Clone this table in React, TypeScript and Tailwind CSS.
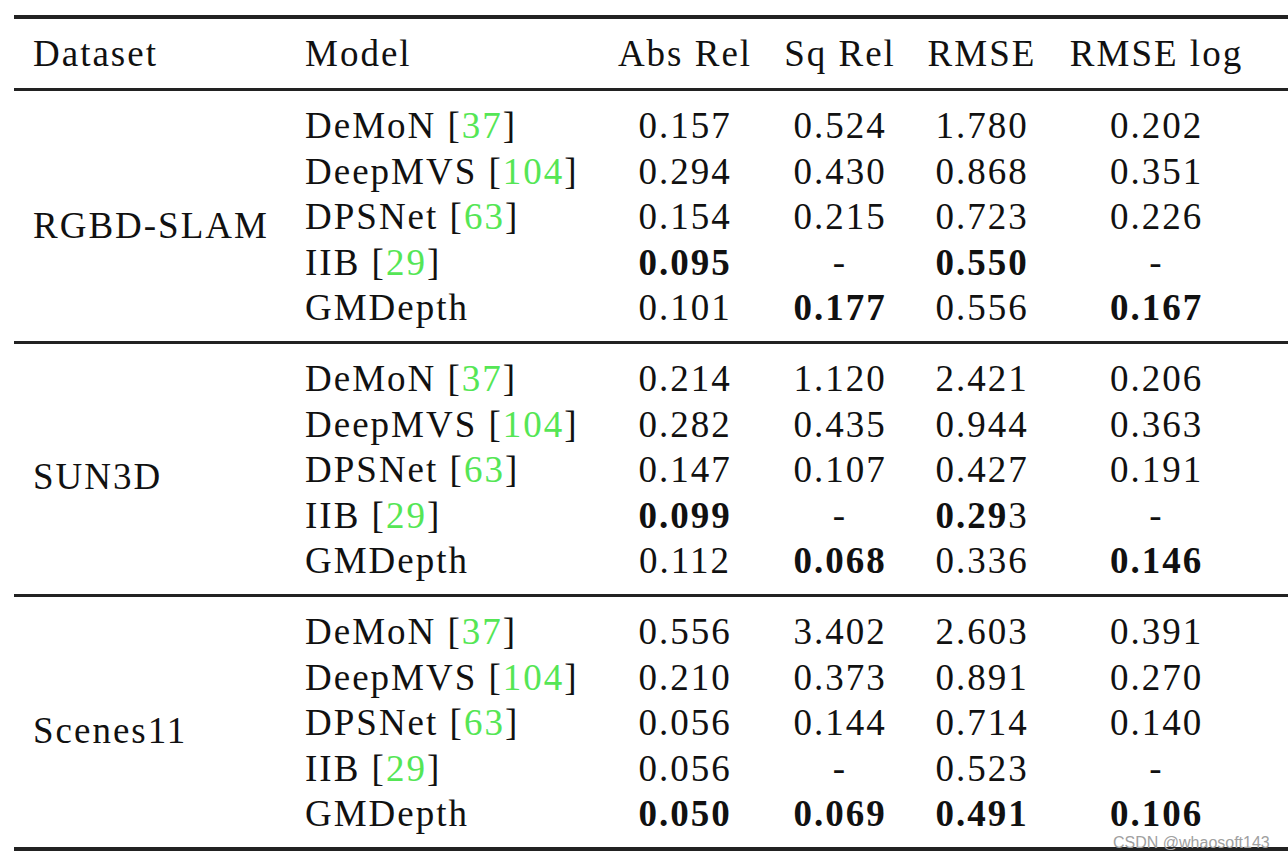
import type { ReactNode } from 'react'

type Cell = string | ReactNode

interface Row {
  model: string
  cite?: string
  values: Cell[]
}

interface Group {
  name: string
  offset: string
  rows: Row[]
}

const B = ({ children }: { children: ReactNode }) => <span className="font-bold">{children}</span>

const groups: Group[] = [
  {
    name: 'RGBD-SLAM',
    offset: 'pt-[18px]',
    rows: [
      { model: 'DeMoN', cite: '37', values: ['0.157', '0.524', '1.780', '0.202'] },
      { model: 'DeepMVS', cite: '104', values: ['0.294', '0.430', '0.868', '0.351'] },
      { model: 'DPSNet', cite: '63', values: ['0.154', '0.215', '0.723', '0.226'] },
      { model: 'IIB', cite: '29', values: [<B>0.095</B>, '-', <B>0.550</B>, '-'] },
      { model: 'GMDepth', values: ['0.101', <B>0.177</B>, '0.556', <B>0.167</B>] },
    ],
  },
  {
    name: 'SUN3D',
    offset: 'pt-[14px]',
    rows: [
      { model: 'DeMoN', cite: '37', values: ['0.214', '1.120', '2.421', '0.206'] },
      { model: 'DeepMVS', cite: '104', values: ['0.282', '0.435', '0.944', '0.363'] },
      { model: 'DPSNet', cite: '63', values: ['0.147', '0.107', '0.427', '0.191'] },
      { model: 'IIB', cite: '29', values: [<B>0.099</B>, '-', <><B>0.29</B>3</>, '-'] },
      { model: 'GMDepth', values: ['0.112', <B>0.068</B>, '0.336', <B>0.146</B>] },
    ],
  },
  {
    name: 'Scenes11',
    offset: 'pt-[16px]',
    rows: [
      { model: 'DeMoN', cite: '37', values: ['0.556', '3.402', '2.603', '0.391'] },
      { model: 'DeepMVS', cite: '104', values: ['0.210', '0.373', '0.891', '0.270'] },
      { model: 'DPSNet', cite: '63', values: ['0.056', '0.144', '0.714', '0.140'] },
      { model: 'IIB', cite: '29', values: ['0.056', '-', '0.523', '-'] },
      { model: 'GMDepth', values: [<B>0.050</B>, <B>0.069</B>, <B>0.491</B>, <B>0.106</B>] },
    ],
  },
]

const cols = 'grid grid-cols-[291px_295px_170px_140px_144px_205px]'

export default function App() {
  return (
    <div className="relative w-[1288px] h-[858px] bg-white overflow-hidden pt-[15px] text-[#111] text-[37px] tracking-[2px] font-['Liberation_Serif',serif]">
      <div className="ml-[14px] w-[1274px]">
        {/* header */}
        <div className={`${cols} border-t-4 border-[#222] h-[73px] pt-[12px] leading-[45.6px]`}>
          <div className="pl-[19px]">Dataset</div>
          <div>Model</div>
          <div className="text-center">Abs Rel</div>
          <div className="text-center">Sq Rel</div>
          <div className="text-center">RMSE</div>
          <div className="text-center">RMSE log</div>
        </div>

        {groups.map((g, gi) => (
          <div
            key={g.name}
            className={`${cols} grid-rows-[repeat(5,45.6px)] border-t-[3px] border-[#222] pt-[12px] pb-[10px] leading-[45.6px] ${
              gi === groups.length - 1 ? 'border-b-4' : ''
            }`}
          >
            <div className={`row-span-5 flex items-center pl-[19px] ${g.offset}`}>{g.name}</div>
            {g.rows.map(r => (
              <>
                <div key={r.model} className="whitespace-nowrap">
                  {r.model}
                  {r.cite && (
                    <>
                      {' '}[<span className="text-[#55e655]">{r.cite}</span>]
                    </>
                  )}
                </div>
                {r.values.map((v, i) => (
                  <div key={i} className="text-center">{v}</div>
                ))}
              </>
            ))}
          </div>
        ))}
      </div>

      <div className="absolute left-[1113px] top-[834px] text-[16px] tracking-normal leading-[18px] text-[#a0a0a0] font-['Liberation_Sans',sans-serif]">
        CSDN @whaosoft143
      </div>
    </div>
  )
}
